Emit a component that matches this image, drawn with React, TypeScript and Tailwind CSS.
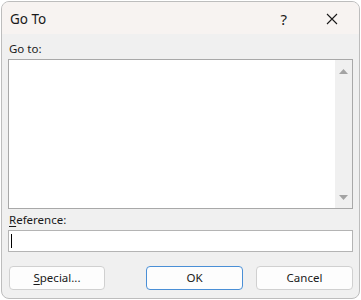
import React from "react";

export default function App() {
  const font = { fontFamily: '"Noto Sans", "Open Sans", sans-serif' };
  return (
    <div className="w-[361px] h-[300px] bg-white pt-[1px] pl-[1px]" style={font}>
      <div className="w-[359px] h-[298px] border border-[#bdbdbd] rounded-[8px] overflow-hidden flex flex-col bg-[#f0f0f0]">
        <div className="h-[32px] bg-[#f7f3f1] flex items-center shrink-0">
          <span className="ml-[8px] text-[13.5px] leading-[16px] text-[#1a1a1a] mt-[1px]">Go To</span>
          <span className="ml-auto text-[15px] leading-[16px] text-[#1a1a1a] mr-[39px] mt-[1px]">?</span>
          <svg width="12" height="12" viewBox="0 0 12 12" className="mr-[21px] mt-[1px]">
            <path d="M1 1 L11 11 M11 1 L1 11" stroke="#1a1a1a" strokeWidth="1.1" fill="none" />
          </svg>
        </div>
        <div className="flex-1 flex flex-col px-[6px] pt-[7px]">
          <div className="text-[11.5px] leading-[16px] text-[#1a1a1a] pl-[1px]">Go to:</div>
          <div className="mt-[2px] h-[150px] border border-[#a8a8a8] bg-white flex">
            <div className="flex-1" />
            <div className="w-[17px] bg-[#f0f0f0] flex flex-col items-center justify-between pt-[9px] pb-[8px]">
              <svg width="9" height="5" viewBox="0 0 9 5">
                <path d="M0 5 L4.5 0 L9 5 Z" fill="#a3a3a3" />
              </svg>
              <svg width="9" height="5" viewBox="0 0 9 5">
                <path d="M0 0 L4.5 5 L9 0 Z" fill="#a3a3a3" />
              </svg>
            </div>
          </div>
          <div className="mt-[3px] text-[11.5px] leading-[16px] text-[#1a1a1a] pl-[1px]">
            <span className="underline underline-offset-[2px]">R</span>eference:
          </div>
          <div className="mt-[2px] h-[22px] border border-[#b4b4b4] bg-white flex items-center">
            <div className="ml-[2px] w-[1px] h-[14px] bg-black" />
          </div>
          <div className="mt-[14px] flex items-center">
            <button className="ml-[1px] w-[96px] h-[24px] rounded-[4px] border border-[#d0d0d0] bg-[#fdfdfd] text-[11.5px] text-[#1a1a1a]">
              <span className="underline underline-offset-[2px]">S</span>pecial...
            </button>
            <button className="ml-[41px] w-[97px] h-[24px] rounded-[4px] border border-[#4a8fd6] bg-[#fdfdfd] text-[11.5px] text-[#1a1a1a]">
              OK
            </button>
            <button className="ml-[13px] w-[97px] h-[24px] rounded-[4px] border border-[#d0d0d0] bg-[#fdfdfd] text-[11.5px] text-[#1a1a1a]">
              Cancel
            </button>
          </div>
        </div>
      </div>
    </div>
  );
}
